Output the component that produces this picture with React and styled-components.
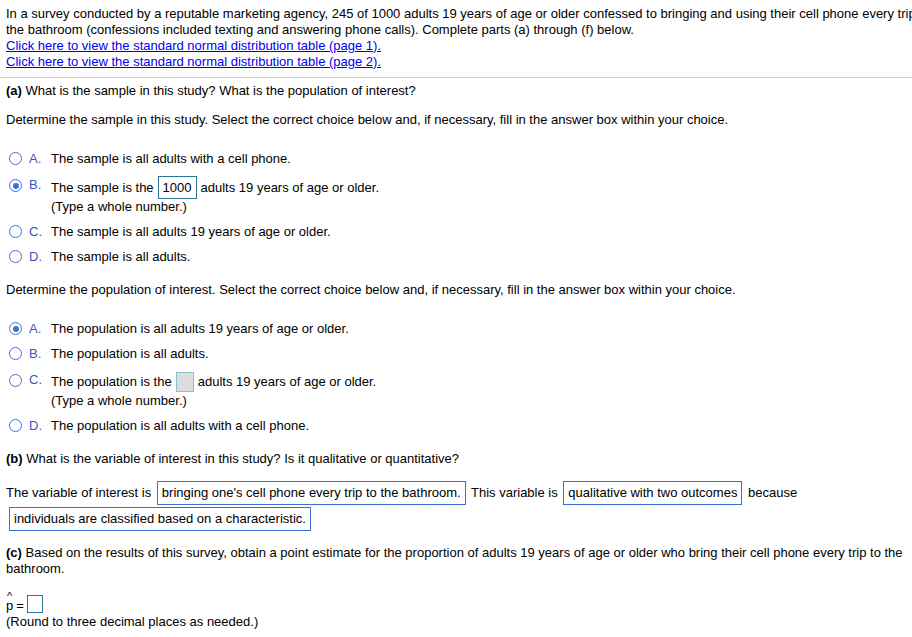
import React from 'react';
import styled, { createGlobalStyle } from 'styled-components';

const GlobalStyle = createGlobalStyle`
    html, body {
        margin: 0;
        padding: 0;
        background: #fff;
        overflow: hidden;
    }
    body {
        font-family: "Liberation Sans", Arial, sans-serif;
        font-size: 13px;
        color: #000;
    }
`;

const Page = styled.div`
    width: 912px;
    padding-top: 6px;
`;

const Intro = styled.div`
    padding-left: 6px;
    line-height: 16px;
    white-space: nowrap;
`;

const TableLink = styled.a`
    display: block;
    color: #0000ee;
    text-decoration: underline;
    cursor: pointer;
`;

const Divider = styled.hr`
    margin: 7px 0 0 0;
    border: none;
    border-top: 1px solid #cfd0d6;
`;

const Body = styled.div`
    padding: 5px 0 0 6px;
    line-height: 16px;
`;

const Heading = styled.div`
    margin-top: ${(p) => p.$top || 0}px;
`;

const Part = styled.b`
    font-weight: bold;
`;

const Instruction = styled.div`
    margin-top: ${(p) => p.$top || 13}px;
`;

const Choices = styled.div`
    display: flex;
    flex-direction: column;
    gap: 9px;
    margin-top: 23px;
`;

const Choice = styled.div`
    display: flex;
    align-items: flex-start;
    padding-left: 3px;
`;

const Radio = styled.span`
    flex: none;
    box-sizing: border-box;
    width: 13px;
    height: 13px;
    margin-top: ${(p) => (p.$tall ? 3 : 1)}px;
    border-radius: 50%;
    border: 1.5px solid #3f6fd8;
    display: flex;
    align-items: center;
    justify-content: center;
    &::after {
        content: '';
        display: ${(p) => (p.$checked ? 'block' : 'none')};
        width: 6px;
        height: 6px;
        border-radius: 50%;
        background: #3f6fd8;
    }
`;

const Letter = styled.span`
    flex: none;
    width: 22px;
    margin-left: 7px;
    margin-top: ${(p) => (p.$tall ? 1 : 0)}px;
    color: #3d56bf;
`;

const ChoiceText = styled.div`
    display: flex;
    flex-direction: column;
`;

const FirstLine = styled.div`
    line-height: ${(p) => (p.$tall ? 22 : 16)}px;
    display: flex;
    align-items: center;
    white-space: pre;
`;

const FillBox = styled.span`
    display: inline-flex;
    align-items: center;
    justify-content: center;
    box-sizing: border-box;
    height: ${(p) => p.$h || 23}px;
    min-width: ${(p) => p.$w || 18}px;
    padding: 0 ${(p) => (p.$pad ? 4 : 0)}px;
    margin: 0 4px;
    border: 1px solid ${(p) => (p.$empty ? '#8fbfcf' : '#2a7896')};
    background: ${(p) => (p.$empty ? '#dddddd' : '#fff')};
    line-height: 16px;
`;

const Hint = styled.div``;

const AnswerBlock = styled.div`
    margin-top: 13px;
    line-height: 26px;
`;

const Answer = styled.span`
    display: inline-block;
    border: 1px solid #3b6fd4;
    padding: 3px 4px;
    line-height: 16px;
    margin: 0 ${(p) => (p.$first ? 0 : 2)}px 0 ${(p) => (p.$first ? 3 : 2)}px;
`;

const EstimateRow = styled.div`
    margin-top: 14px;
    display: flex;
    align-items: flex-end;
    height: 22px;
`;

const PHat = styled.span`
    display: inline-flex;
    flex-direction: column;
    align-items: center;
    margin-right: 3px;
`;

const Hat = styled.span`
    font-size: 11px;
    line-height: 6px;
    height: 6px;
    overflow: visible;
`;

const PLetter = styled.span`
    line-height: 14px;
`;

const Equals = styled.span`
    line-height: 14px;
    margin-right: 3px;
`;

const EstimateBox = styled.span`
    box-sizing: border-box;
    width: 16px;
    height: 18px;
    border: 1px solid #2a7896;
    background: #fff;
`;

const Note = styled.div`
    margin-top: 1px;
`;

function Option({ letter, checked, tall, children, hint }) {
    return (
        <Choice>
            <Radio $checked={checked} $tall={tall} />
            <Letter $tall={tall}>{letter}.</Letter>
            <ChoiceText>
                <FirstLine $tall={tall}>{children}</FirstLine>
                {hint && <Hint>{hint}</Hint>}
            </ChoiceText>
        </Choice>
    );
}

export default function App() {
    return (
        <Page>
            <GlobalStyle />
            <Intro>
                In a survey conducted by a reputable marketing agency, 245 of 1000 adults 19 years of age or older confessed to bringing and using their cell phone every trip to
                <br />
                the bathroom (confessions included texting and answering phone calls). Complete parts (a) through (f) below.
                <TableLink>Click here to view the standard normal distribution table (page 1).</TableLink>
                <TableLink>Click here to view the standard normal distribution table (page 2).</TableLink>
            </Intro>
            <Divider />
            <Body>
                <Heading>
                    <Part>(a)</Part> What is the sample in this study? What is the population of interest?
                </Heading>
                <Instruction>
                    Determine the sample in this study. Select the correct choice below and, if necessary, fill in the answer box within your choice.
                </Instruction>
                <Choices>
                    <Option letter="A">The sample is all adults with a cell phone.</Option>
                    <Option letter="B" checked tall hint="(Type a whole number.)">
                        The sample is the<FillBox $pad>1000</FillBox>adults 19 years of age or older.
                    </Option>
                    <Option letter="C">The sample is all adults 19 years of age or older.</Option>
                    <Option letter="D">The sample is all adults.</Option>
                </Choices>
                <Instruction $top={17}>
                    Determine the population of interest. Select the correct choice below and, if necessary, fill in the answer box within your choice.
                </Instruction>
                <Choices>
                    <Option letter="A" checked>The population is all adults 19 years of age or older.</Option>
                    <Option letter="B">The population is all adults.</Option>
                    <Option letter="C" tall hint="(Type a whole number.)">
                        The population is the<FillBox $empty $w={18} $h={20} />adults 19 years of age or older.
                    </Option>
                    <Option letter="D">The population is all adults with a cell phone.</Option>
                </Choices>
                <Heading $top={17}>
                    <Part>(b)</Part> What is the variable of interest in this study? Is it qualitative or quantitative?
                </Heading>
                <AnswerBlock>
                    The variable of interest is <Answer>bringing one's cell phone every trip to the bathroom.</Answer> This variable is <Answer>qualitative with two outcomes</Answer> because
                    <br />
                    <Answer $first>individuals are classified based on a characteristic.</Answer>
                </AnswerBlock>
                <Heading $top={13}>
                    <Part>(c)</Part> Based on the results of this survey, obtain a point estimate for the proportion of adults 19 years of age or older who bring their cell phone every trip to the bathroom.
                </Heading>
                <EstimateRow>
                    <PHat>
                        <Hat>^</Hat>
                        <PLetter>p</PLetter>
                    </PHat>
                    <Equals>=</Equals>
                    <EstimateBox />
                </EstimateRow>
                <Note>(Round to three decimal places as needed.)</Note>
            </Body>
        </Page>
    );
}
